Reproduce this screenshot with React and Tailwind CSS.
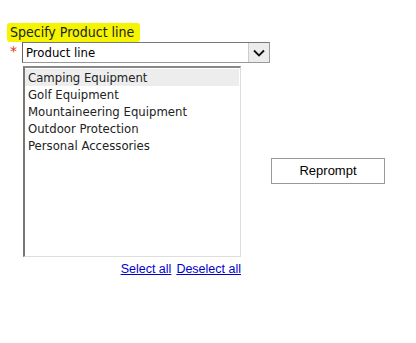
import React from "react";

export default function App() {
  const items = [
    "Camping Equipment",
    "Golf Equipment",
    "Mountaineering Equipment",
    "Outdoor Protection",
    "Personal Accessories",
  ];
  return (
    <div className="w-[416px] h-[343px] bg-white relative" style={{ fontFamily: '"DejaVu Sans", sans-serif' }}>
      <div className="flex">
        <div className="pt-[23px] pl-[7px] flex flex-col">
          <div className="flex">
            <span className="bg-[#f5f500] text-[14px] leading-[19px] pl-[3px] pr-[6px] text-[#222] rounded-[3px]" style={{ fontFamily: '"DejaVu Sans Condensed", "DejaVu Sans", sans-serif' }}>
              Specify Product line
            </span>
          </div>
          <div className="flex items-start">
            <span className="text-[#e03010] text-[14px] leading-[14px] w-[15px] pl-[3px] pt-[2px]">*</span>
            <div className="w-[248px] h-[21px] border border-[#999] border-l-[#666] border-t-[#777] flex items-center">
              <span className="flex-1 pl-[3px] text-[13px] leading-[16px] text-black" style={{ fontFamily: '"DejaVu Sans Condensed", sans-serif' }}>Product line</span>
              <div className="w-[21px] h-[19px] bg-[#ececec] border-l border-[#ccc] flex items-center justify-center">
                <svg width="12" height="8" viewBox="0 0 12 8"><path d="M1 1.5 L6 6.5 L11 1.5" fill="none" stroke="#111" strokeWidth="1.8" /></svg>
              </div>
            </div>
          </div>
          <div className="flex pl-[16px] pt-[3px]">
            <div className="w-[218px] h-[191px] border-t-2 border-l-2 border-t-[#888] border-l-[#777] border-r border-b border-r-[#ddd] border-b-[#ddd] pt-[1px] pr-[1px]">
              {items.map((it, i) => (
                <div key={it} className={`h-[17px] pl-[3px] text-[13px] leading-[17px] text-[#222] ${i === 0 ? "bg-[#ededed]" : ""}`} style={{ fontFamily: '"DejaVu Sans Condensed", sans-serif' }}>
                  {it}
                </div>
              ))}
            </div>
          </div>
          <div className="flex pl-[16px]">
            <div className="w-[218px] flex justify-end gap-[5px] pt-[5px] text-[12.5px] leading-[14px]" style={{ fontFamily: '"Liberation Sans", Arial, sans-serif' }}>
              <a className="text-[#0000cc] underline">Select all</a>
              <a className="text-[#0000cc] underline">Deselect all</a>
            </div>
          </div>
        </div>
        <div className="pl-[1px] pt-[158px]">
          <div className="w-[114px] h-[26px] border border-[#999] flex items-center justify-center text-[13px] text-black" style={{ fontFamily: '"Liberation Sans", Arial, sans-serif' }}>
            Reprompt
          </div>
        </div>
      </div>
    </div>
  );
}
